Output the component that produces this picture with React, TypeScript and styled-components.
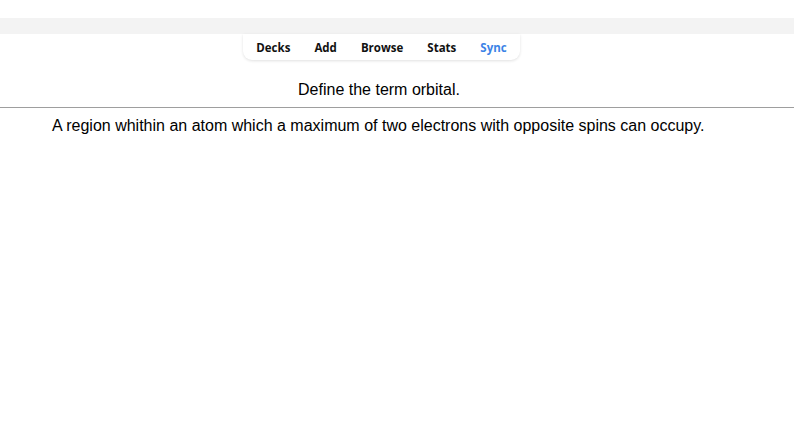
import React from 'react'
import styled, { createGlobalStyle } from 'styled-components'

const Global = createGlobalStyle`
  html, body {
    margin: 0;
    padding: 0;
    background: #ffffff;
  }
  body {
    font-family: "Liberation Sans", Arial, sans-serif;
    color: #000;
  }
`

const Page = styled.div`
  display: flex;
  flex-direction: column;
  padding-top: 18px;
`

const Band = styled.div`
  height: 16px;
  background: #f3f3f3;
`

const NavRow = styled.div`
  display: flex;
  justify-content: center;
  padding-right: 31px;
`

const Toolbar = styled.nav`
  display: flex;
  align-items: center;
  height: 26px;
  padding: 0 1px;
  background: #fff;
  border-radius: 0 0 9px 9px;
  box-shadow: 0 1px 3px rgba(0, 0, 0, 0.12);
`

const NavItem = styled.span<{ $active?: boolean }>`
  padding: 0 12px;
  font-family: "Open Sans", "Noto Sans", sans-serif;
  font-weight: 700;
  font-size: 11.5px;
  color: ${(p) => (p.$active ? '#3c83e6' : '#111')};
`

const Question = styled.div`
  padding: 20px 36px 0 0;
  height: 27px;
  text-align: center;
  font-size: 16px;
  line-height: 20px;
`

const Rule = styled.hr`
  margin: 0;
  border: none;
  border-top: 1px solid #9e9e9e;
`

const Answer = styled.div`
  padding: 8px 0 0 52px;
  font-size: 16px;
  line-height: 20px;
`

const items = ['Decks', 'Add', 'Browse', 'Stats', 'Sync']

export default function App() {
  return (
    <Page>
      <Global />
      <Band />
      <NavRow>
        <Toolbar>
          {items.map((t) => (
            <NavItem key={t} $active={t === 'Sync'}>
              {t}
            </NavItem>
          ))}
        </Toolbar>
      </NavRow>
      <Question>Define the term orbital.</Question>
      <Rule />
      <Answer>
        A region whithin an atom which a maximum of two electrons with opposite spins can occupy.
      </Answer>
    </Page>
  )
}
